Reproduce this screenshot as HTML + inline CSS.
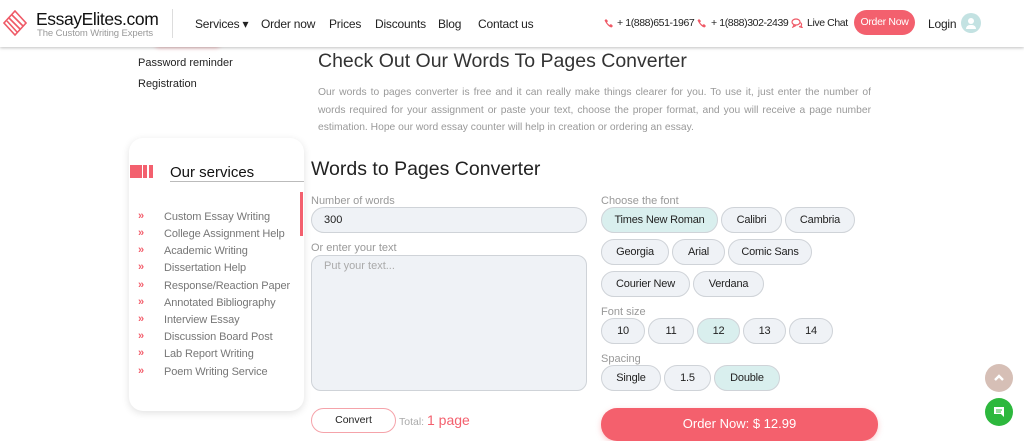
<!DOCTYPE html>
<html><head><meta charset="utf-8"><style>
*{box-sizing:border-box;margin:0;padding:0}
body{width:1024px;height:441px;overflow:hidden;background:#fff;font-family:"Liberation Sans",sans-serif;position:relative;color:#222}
.a{position:absolute;white-space:nowrap}
.hdr{position:absolute;left:0;top:0;width:1024px;height:47px;background:#fff;box-shadow:0 1px 3px rgba(0,0,0,.25);z-index:2}
.nav{font-size:12px;color:#222;top:17px;letter-spacing:-0.2px}
.ph{font-size:10.5px;top:17px;letter-spacing:-0.4px}
.chip{position:absolute;height:26px;border:1px solid #cfd3d8;border-radius:13px;background:#eff2f6;font-size:11px;color:#222;text-align:center;line-height:24px;letter-spacing:-0.2px}
.act{background:#d9efee}
.lbl{font-size:11px;color:#999}
.li{font-size:11px;color:#777;left:164px;letter-spacing:-0.1px}
.ch{font-size:11px;color:#f3606e;left:138px;font-weight:bold}
</style></head><body>
<div class="hdr">
<svg class="a" style="left:3px;top:10px" width="24" height="26" viewBox="0 0 24 26"><g fill="none" stroke="#ef5a67" stroke-width="1.6"><path d="M12 1 L23 13 L12 25 L1 13 Z"/><path d="M6 8 L17 19 M9 5 L20 16 M4 11 L14 22"/></g></svg>
<div class="a" style="left:36px;top:9px;font-size:17.5px;letter-spacing:-0.4px;color:#111">EssayElites.com</div>
<div class="a" style="left:37px;top:28px;font-size:9.5px;letter-spacing:-0.1px;color:#999">The Custom Writing Experts</div>
<div class="a" style="left:172px;top:9px;width:1px;height:29px;background:#ddd"></div>
<div class="a nav" style="left:195px">Services ▾</div>
<div class="a nav" style="left:261px">Order now</div>
<div class="a nav" style="left:329px">Prices</div>
<div class="a nav" style="left:375px">Discounts</div>
<div class="a nav" style="left:438px">Blog</div>
<div class="a nav" style="left:478px">Contact us</div>
<svg class="a" style="left:604px;top:18px" width="10" height="10" viewBox="0 0 10 10"><path d="M2 1 L4 3 L3 4.5 Q4.5 6.5 5.5 7 L7 6 L9 8 L7.5 9.5 Q4 9 0.5 2.5 Z" fill="#ef5a67"/></svg>
<div class="a ph" style="left:617px">+ 1(888)651-1967</div>
<svg class="a" style="left:697px;top:18px" width="10" height="10" viewBox="0 0 10 10"><path d="M2 1 L4 3 L3 4.5 Q4.5 6.5 5.5 7 L7 6 L9 8 L7.5 9.5 Q4 9 0.5 2.5 Z" fill="#ef5a67"/></svg>
<div class="a ph" style="left:711px">+ 1(888)302-2439</div>
<svg class="a" style="left:791px;top:18px" width="12" height="10" viewBox="0 0 12 10"><g fill="none" stroke="#ef5a67" stroke-width="1.2"><ellipse cx="5" cy="4" rx="4" ry="3"/><path d="M3 7 L2 9 L5 7.5"/><path d="M9 4.5 Q11.5 5.5 10 8 L11 9.5 L8 8.5"/></g></svg>
<div class="a ph" style="left:807px">Live Chat</div>
<div class="a" style="left:854px;top:10px;width:61px;height:25px;border-radius:13px;background:#f3606e;color:#fff;font-size:10.5px;letter-spacing:-0.3px;text-align:center;line-height:25px">Order Now</div>
<div class="a nav" style="left:928px">Login</div>
<div class="a" style="left:961px;top:13px;width:20px;height:20px;border-radius:50%;background:#c3e2e2"><div class="a" style="left:7px;top:5px;width:6px;height:6px;border-radius:50%;background:#fff"></div><div class="a" style="left:5px;top:12px;width:10px;height:4px;border-radius:4px 4px 0 0;background:#fff"></div></div>
</div>
<div class="a" style="left:155px;top:40px;width:65px;height:8px;border-radius:6px;background:#f6c6c9;filter:blur(2px)"></div>
<div class="a" style="left:138px;top:57px;font-size:11px;color:#222">Password reminder</div>
<div class="a" style="left:138px;top:78px;font-size:11px;color:#222">Registration</div>

<div class="a" style="left:129px;top:138px;width:175px;height:273px;border-radius:14px;background:#fff;box-shadow:0 2px 8px rgba(0,0,0,.12)"></div>
<div class="a" style="left:130px;top:165px;width:12px;height:13px;background:#f3606e"></div>
<div class="a" style="left:143px;top:165px;width:4px;height:13px;background:#f3606e"></div>
<div class="a" style="left:149px;top:165px;width:4px;height:13px;background:#f3606e"></div>
<div class="a" style="left:170px;top:164px;font-size:15px;color:#111">Our services</div>
<div class="a" style="left:170px;top:181px;width:134px;height:1px;background:#bbb"></div>
<div class="a" style="left:300px;top:192px;width:3px;height:44px;background:#f3606e"></div>
<div class="a ch" style="top:210px">»</div><div class="a li" style="top:211px">Custom Essay Writing</div>
<div class="a ch" style="top:227px">»</div><div class="a li" style="top:228px">College Assignment Help</div>
<div class="a ch" style="top:244px">»</div><div class="a li" style="top:245px">Academic Writing</div>
<div class="a ch" style="top:261px">»</div><div class="a li" style="top:262px">Dissertation Help</div>
<div class="a ch" style="top:279px">»</div><div class="a li" style="top:280px">Response/Reaction Paper</div>
<div class="a ch" style="top:296px">»</div><div class="a li" style="top:297px">Annotated Bibliography</div>
<div class="a ch" style="top:313px">»</div><div class="a li" style="top:314px">Interview Essay</div>
<div class="a ch" style="top:330px">»</div><div class="a li" style="top:331px">Discussion Board Post</div>
<div class="a ch" style="top:347px">»</div><div class="a li" style="top:348px">Lab Report Writing</div>
<div class="a ch" style="top:365px">»</div><div class="a li" style="top:366px">Poem Writing Service</div>

<div class="a" style="left:318px;top:50px;font-size:19.5px;color:#333">Check Out Our Words To Pages Converter</div>
<div class="a" style="left:318px;top:84px;width:553px;white-space:normal;text-align:justify;font-size:10.3px;line-height:17.5px;color:#999">Our words to pages converter is free and it can really make things clearer for you. To use it, just enter the number of words required for your assignment or paste your text, choose the proper format, and you will receive a page number estimation. Hope our word essay counter will help in creation or ordering an essay.</div>
<div class="a" style="left:311px;top:158px;font-size:19.5px;color:#222">Words to Pages Converter</div>

<div class="a lbl" style="left:311px;top:195px">Number of words</div>
<div class="a" style="left:311px;top:207px;width:276px;height:26px;border:1px solid #cfd3d8;border-radius:13px;background:#eff2f6;font-size:11px;padding-left:12px;line-height:24px">300</div>
<div class="a lbl" style="left:311px;top:242px">Or enter your text</div>
<div class="a" style="left:311px;top:255px;width:276px;height:136px;border:1px solid #cfd3d8;border-radius:10px;background:#eff2f6;font-size:11px;color:#aaa;padding:4px 12px">Put your text...</div>

<div class="a lbl" style="left:601px;top:195px">Choose the font</div>
<div class="chip act" style="left:601px;top:207px;width:117px">Times New Roman</div>
<div class="chip" style="left:721px;top:207px;width:61px">Calibri</div>
<div class="chip" style="left:785px;top:207px;width:70px">Cambria</div>
<div class="chip" style="left:601px;top:239px;width:68px">Georgia</div>
<div class="chip" style="left:672px;top:239px;width:53px">Arial</div>
<div class="chip" style="left:728px;top:239px;width:84px">Comic Sans</div>
<div class="chip" style="left:601px;top:271px;width:89px">Courier New</div>
<div class="chip" style="left:693px;top:271px;width:71px">Verdana</div>
<div class="a lbl" style="left:601px;top:306px">Font size</div>
<div class="chip" style="left:601px;top:318px;width:44px">10</div>
<div class="chip" style="left:648px;top:318px;width:46px">11</div>
<div class="chip act" style="left:697px;top:318px;width:43px">12</div>
<div class="chip" style="left:743px;top:318px;width:43px">13</div>
<div class="chip" style="left:789px;top:318px;width:44px">14</div>
<div class="a lbl" style="left:601px;top:353px">Spacing</div>
<div class="chip" style="left:601px;top:365px;width:60px">Single</div>
<div class="chip" style="left:664px;top:365px;width:47px">1.5</div>
<div class="chip act" style="left:714px;top:365px;width:66px">Double</div>

<div class="a" style="left:311px;top:408px;width:85px;height:25px;border:1px solid #f5a3aa;border-radius:13px;font-size:10.5px;text-align:center;line-height:23px;color:#222">Convert</div>
<div class="a" style="left:399px;top:416px;font-size:10.5px;color:#aaa">Total:</div>
<div class="a" style="left:427px;top:412px;font-size:14px;color:#f3606e">1 page</div>
<div class="a" style="left:601px;top:408px;width:277px;height:33px;border-radius:16px;background:#f4606d;color:#fff;font-size:13px;text-align:center;line-height:32px;box-shadow:0 2px 6px rgba(244,96,109,.35)">Order Now: $ 12.99</div>

<div class="a" style="left:985px;top:364px;width:28px;height:28px;border-radius:50%;background:#d6bfb6"><svg class="a" style="left:8px;top:9px" width="12" height="9" viewBox="0 0 12 9"><path d="M2 7 L6 3 L10 7" fill="none" stroke="#fff" stroke-width="2.4"/></svg></div>
<div class="a" style="left:985px;top:398px;width:28px;height:28px;border-radius:50%;background:#2db83d"><svg class="a" style="left:8px;top:8px" width="12" height="12" viewBox="0 0 12 12"><path d="M1 1 H11 V11 L8 8 H1 Z" fill="#fff"/><path d="M3 4 H9 M3 6 H8" stroke="#2db83d" stroke-width="1"/></svg></div>
</body></html>
